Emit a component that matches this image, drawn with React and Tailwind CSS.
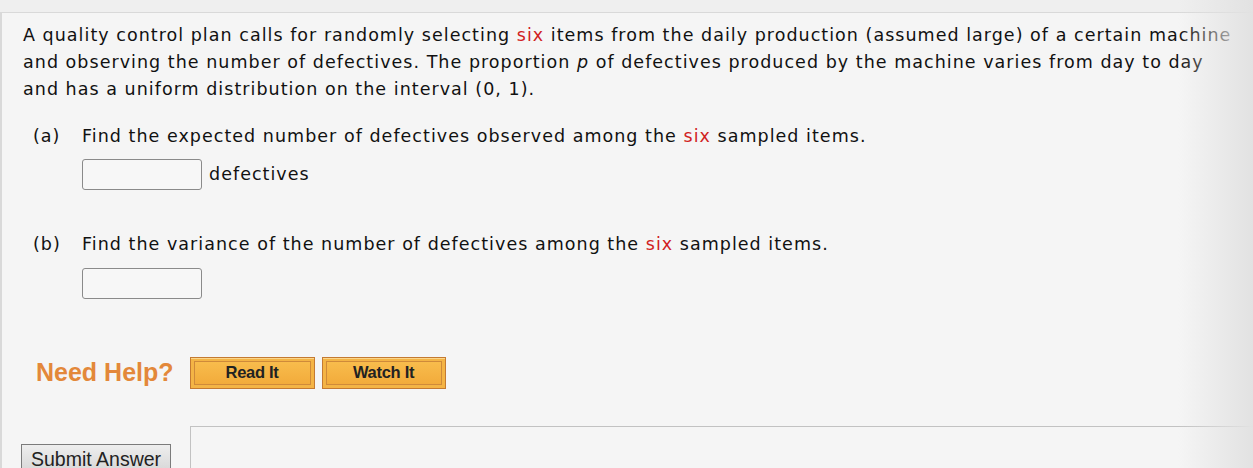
import React from "react";

const Red = ({ children }) => <span className="text-[#d11f1f]">{children}</span>;

const HelpButton = ({ label, w }) => (
  <button
    className={`h-[32px] ${w} border border-[#c47a32] bg-[#f4b445] p-[3px] shadow-[inset_0_1px_0_#fbd68a]`}
  >
    <span className="flex h-full w-full items-center justify-center border border-[#cf8a3a] bg-gradient-to-b from-[#f8bc4c] to-[#f2ab3b] text-[16.5px] font-bold tracking-[-0.3px] text-[#222] [font-family:'Liberation_Sans',Arial,sans-serif]">
      {label}
    </span>
  </button>
);

export default function App() {
  return (
    <div className="relative h-[468px] w-[1253px] overflow-hidden bg-[#efefef] [font-family:'DejaVu_Sans',Verdana,sans-serif]">
      <div className="mt-[12px] h-[456px] border-l-2 border-t border-[#d9d9d9] bg-[#f5f5f5] text-[#111]">
        <div className="tracking-[1.03px]">
          <p className="pl-[21px] pr-[10px] pt-[9px] text-[17.5px] leading-[27px]">
            A quality control plan calls for randomly selecting <Red>six</Red> items from the daily production (assumed large) of a certain machine and observing the number of defectives. The proportion <i>p</i> of defectives produced by the machine varies from day to day and has a uniform distribution on the interval (0, 1).
          </p>

          <div className="mt-[20px] flex pl-[31px] text-[17.5px] leading-[27px]">
            <span className="w-[49px]">(a)</span>
            <div>
              <div>
                Find the expected number of defectives observed among the <Red>six</Red> sampled items.
              </div>
              <div className="mt-[9px] flex items-center gap-[7px]">
                <div className="h-[31px] w-[120px] rounded-[3px] border border-[#8a8a8a] bg-[#f7f7f7]" />
                <span>defectives</span>
              </div>
            </div>
          </div>

          <div className="mt-[41px] flex pl-[31px] text-[17.5px] leading-[27px]">
            <span className="w-[49px]">(b)</span>
            <div>
              <div>Find the variance of the number of defectives among the <Red>six</Red> sampled items.</div>
              <div className="mt-[10px] h-[31px] w-[120px] rounded-[3px] border border-[#8a8a8a] bg-[#f7f7f7]" />
            </div>
          </div>
        </div>

        <div className="mt-[55px] flex items-center pl-[34px]">
          <span className="mr-[16px] text-[25px] font-bold text-[#e3883a] [font-family:'Liberation_Sans',Arial,sans-serif]">
            Need Help?
          </span>
          <HelpButton label="Read It" w="w-[125px]" />
          <span className="w-[7px]" />
          <HelpButton label="Watch It" w="w-[124px]" />
        </div>

        <div className="mt-[34px] flex items-start">
          <button className="ml-[19px] mt-[18px] h-[30px] border border-[#7b7b7b] bg-gradient-to-b from-[#eeeeee] to-[#d6d6d6] px-[9px] text-[19.5px] leading-[26px] text-[#222] [font-family:'Liberation_Sans',Arial,sans-serif]">
            Submit Answer
          </button>
          <div className="ml-[19px] h-[60px] flex-1 border-l border-t border-[#c2c2c2] bg-[#f5f5f5]" />
        </div>
      </div>
      <div className="pointer-events-none absolute right-0 top-0 h-full w-[75px] bg-gradient-to-r from-transparent to-[#e2e2e2]" />
    </div>
  );
}
